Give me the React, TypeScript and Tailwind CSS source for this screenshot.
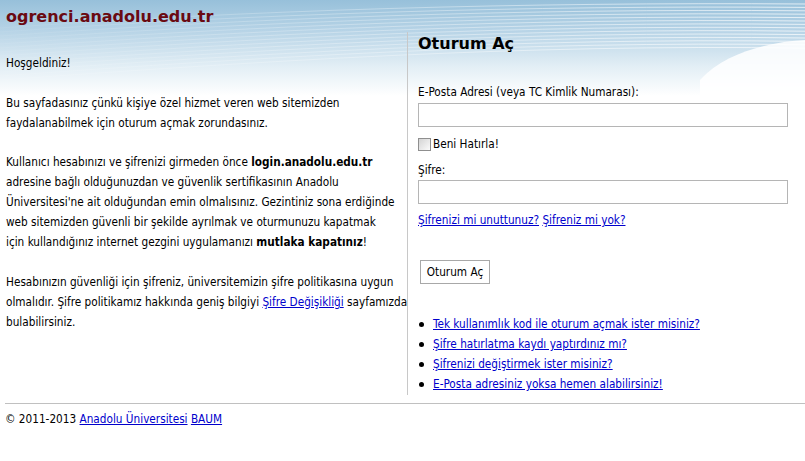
import React from "react";

const font = "font-['DejaVu_Sans_Condensed','DejaVu_Sans',sans-serif]";

const HeaderBg = () => (
  <svg
    className="absolute left-0 top-0 w-full h-[120px] pointer-events-none"
    viewBox="0 0 805 120"
    preserveAspectRatio="none"
  >
    <defs>
      <linearGradient id="sky" x1="0" y1="0" x2="0" y2="1">
        <stop offset="0" stopColor="#97c0da" />
        <stop offset="0.25" stopColor="#b6d3e6" />
        <stop offset="0.55" stopColor="#e2eef5" />
        <stop offset="0.8" stopColor="#ffffff" />
      </linearGradient>
      <linearGradient id="fade" x1="0" y1="0" x2="1" y2="0">
        <stop offset="0" stopColor="#ffffff" stopOpacity="0.05" />
        <stop offset="0.6" stopColor="#ffffff" stopOpacity="0.4" />
        <stop offset="1" stopColor="#ffffff" stopOpacity="0.7" />
      </linearGradient>
    </defs>
    <rect width="805" height="120" fill="url(#sky)" />
    {Array.from({ length: 14 }).map((_, i) => (
      <path
        key={i}
        d={`M0 ${28 + i * 4} C 250 ${10 + i * 4}, 520 ${2 + i * 3.2}, 805 ${4 + i * 3.4}`}
        stroke="url(#fade)"
        strokeWidth="1"
        fill="none"
      />
    ))}
    <path d="M700 80 C 725 52, 770 42, 805 40 L805 120 L700 120 Z" fill="#ffffff" opacity="0.85" />
  </svg>
);

const Field = () => (
  <input
    type="text"
    className="block w-[370px] h-[24px] border border-[#b5b5b5] bg-white outline-none"
  />
);

const links = [
  "Tek kullanımlık kod ile oturum açmak ister misiniz?",
  "Şifre hatırlatma kaydı yaptırdınız mı?",
  "Şifrenizi değiştirmek ister misiniz?",
  "E-Posta adresiniz yoksa hemen alabilirsiniz!",
];

export default function App() {
  return (
    <div className={`relative min-h-screen bg-white text-[11.7px] leading-[20px] text-black ${font}`}>
      <HeaderBg />
      <div className="relative">
        <h1 className="h-[32px] pl-[6px] pt-[7px] text-[16px] leading-[20px] font-bold text-[#6a0a12] font-['DejaVu_Sans',sans-serif]">
          ogrenci.anadolu.edu.tr
        </h1>

        <div className="flex">
          <div className="w-[407px] pl-[6px] pt-[21px] whitespace-nowrap">
            <p>Hoşgeldiniz!</p>
            <p className="mt-[20px]">
              Bu sayfadasınız çünkü kişiye özel hizmet veren web sitemizden
              <br />
              faydalanabilmek için oturum açmak zorundasınız.
            </p>
            <p className="mt-[19px]">
              Kullanıcı hesabınızı ve şifrenizi girmeden önce <b>login.anadolu.edu.tr</b>
              <br />
              adresine bağlı olduğunuzdan ve güvenlik sertifikasının Anadolu
              <br />
              Üniversitesi'ne ait olduğundan emin olmalısınız. Gezintiniz sona erdiğinde
              <br />
              web sitemizden güvenli bir şekilde ayrılmak ve oturmunuzu kapatmak
              <br />
              için kullandığınız internet gezgini uygulamanızı <b>mutlaka kapatınız</b>!
            </p>
            <p className="mt-[20px]">
              Hesabınızın güvenliği için şifreniz, üniversitemizin şifre politikasına uygun
              <br />
              olmalıdır. Şifre politikamız hakkında geniş bilgiyi{" "}
              <a href="#" className="text-[#0000cc] underline">
                Şifre Değişikliği
              </a>{" "}
              sayfamızda
              <br />
              bulabilirsiniz.
            </p>
          </div>

          <div className="flex-1 border-l border-[#c8c8c8] pl-[10px] pt-[2px] pb-[1px] h-[363px]">
            <h2 className="text-[16px] leading-[20px] font-bold font-['DejaVu_Sans',sans-serif]">
              Oturum Aç
            </h2>
            <div className="mt-[28px]">E-Posta Adresi (veya TC Kimlik Numarası):</div>
            <div className="mt-[1px]">
              <Field />
            </div>
            <label className="mt-[7px] flex items-center">
              <span className="w-[13px] h-[13px] border border-[#8f8f8f] bg-linear-to-br from-[#d4d4d4] to-[#fbfbfb]" />
              <span className="ml-[2px]">Beni Hatırla!</span>
            </label>
            <div className="mt-[6px]">Şifre:</div>
            <Field />
            <div className="mt-[6px]">
              <a href="#" className="text-[#0000cc] underline">
                Şifrenizi mi unuttunuz?
              </a>{" "}
              <a href="#" className="text-[#0000cc] underline">
                Şifreniz mi yok?
              </a>
            </div>
            <button className="mt-[30px] ml-[2px] w-[70px] h-[24px] border border-[#a8a8a8] bg-white text-[11.7px] leading-[20px]">
              Oturum Aç
            </button>
            <ul className="mt-[30px]">
              {links.map((l) => (
                <li key={l} className="flex items-center">
                  <span className="ml-[1px] mr-[9px] w-[5px] h-[5px] rounded-full bg-black" />
                  <a href="#" className="text-[#0000cc] underline">
                    {l}
                  </a>
                </li>
              ))}
            </ul>
          </div>
        </div>

        <div className="mt-[8px] ml-[5px] h-px bg-[#c0c0c0]" />
        <div className="mt-[5px] pl-[5px]">
          © 2011-2013{" "}
          <a href="#" className="text-[#0000cc] underline">
            Anadolu Üniversitesi
          </a>{" "}
          <a href="#" className="text-[#0000cc] underline">
            BAUM
          </a>
        </div>
      </div>
    </div>
  );
}
